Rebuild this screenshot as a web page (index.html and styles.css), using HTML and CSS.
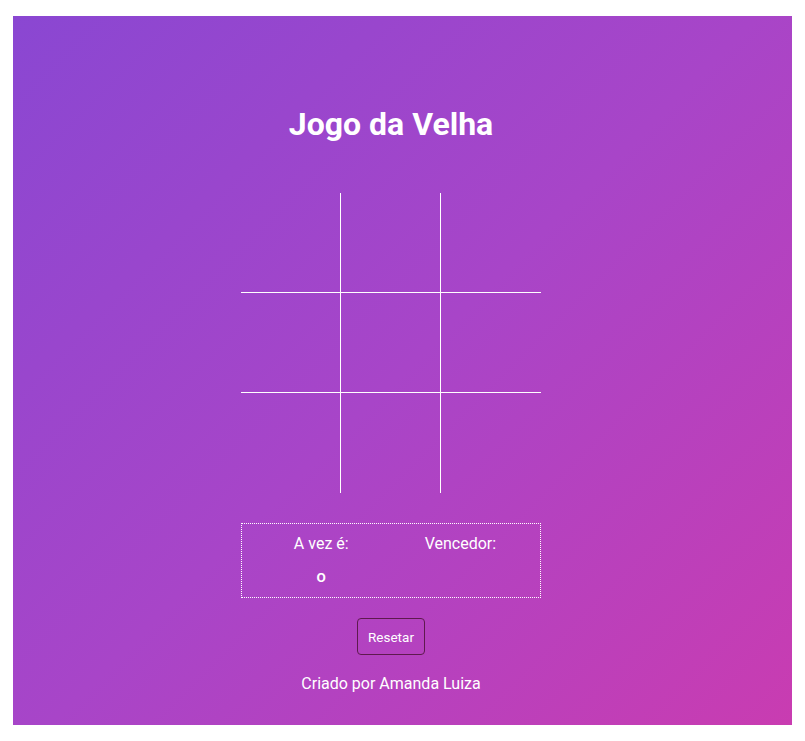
FILE: index.html
```html
<!DOCTYPE html>
<html lang="pt-BR">
<head>
<meta charset="utf-8">
<title>Jogo da Velha</title>
<link rel="stylesheet" href="styles.css">
</head>
<body>
<main class="app">
  <h1 class="title">Jogo da Velha</h1>
  <div class="board">
    <div class="cell br bb"></div>
    <div class="cell br bb"></div>
    <div class="cell bb"></div>
    <div class="cell br bb"></div>
    <div class="cell br bb"></div>
    <div class="cell bb"></div>
    <div class="cell br"></div>
    <div class="cell br"></div>
    <div class="cell"></div>
  </div>
  <div class="info">
    <div class="info-col">
      <span class="label">A vez é:</span>
      <span class="value">O</span>
    </div>
    <div class="info-col">
      <span class="label">Vencedor:</span>
      <span class="value"></span>
    </div>
  </div>
  <button class="reset">Resetar</button>
  <p class="footer">Criado por Amanda Luiza</p>
</main>
</body>
</html>
```
FILE: styles.css
```css
html, body {
  margin: 0;
  padding: 0;
  background: #fff;
}
body {
  padding: 16px 13px;
  font-family: Roboto, "Liberation Sans", sans-serif;
  color: #fff;
}
.app {
  height: 709px;
  box-sizing: border-box;
  padding: 0 23px 0 0;
  background: linear-gradient(135deg, #8a47d2 0%, #a845c8 50%, #c93cb1 100%);
  display: flex;
  flex-direction: column;
  align-items: center;
}
.title {
  margin: 89px 0 0;
  font-size: 32px;
  font-weight: 700;
  line-height: 38px;
}
.board {
  margin-top: 50px;
  display: grid;
  grid-template-columns: repeat(3, 100px);
  grid-template-rows: repeat(3, 100px);
}
.cell {
  box-sizing: border-box;
}
.br { border-right: 1px solid #fff; }
.bb { border-bottom: 1px solid #fff; }
.info {
  margin-top: 30px;
  width: 300px;
  height: 75px;
  box-sizing: border-box;
  border: 1px dotted #fff;
  display: flex;
  justify-content: center;
  gap: 76px;
  padding: 10px 0 0 8px;
}
.info-col {
  display: flex;
  flex-direction: column;
  align-items: center;
}
.label {
  font-size: 16px;
  line-height: 20px;
}
.value {
  margin-top: 15px;
  font-size: 13.5px;
  font-weight: 700;
  line-height: 16px;
}
.reset {
  margin-top: 20px;
  width: 68px;
  height: 37px;
  padding: 0;
  background: transparent;
  border: 1px solid #5e1a4e;
  border-radius: 4px;
  color: #fff;
  font-family: Roboto, "Liberation Sans", sans-serif;
  font-size: 13.5px;
}
.footer {
  margin: 18px 0 0;
  font-size: 16px;
  line-height: 22px;
}
```
